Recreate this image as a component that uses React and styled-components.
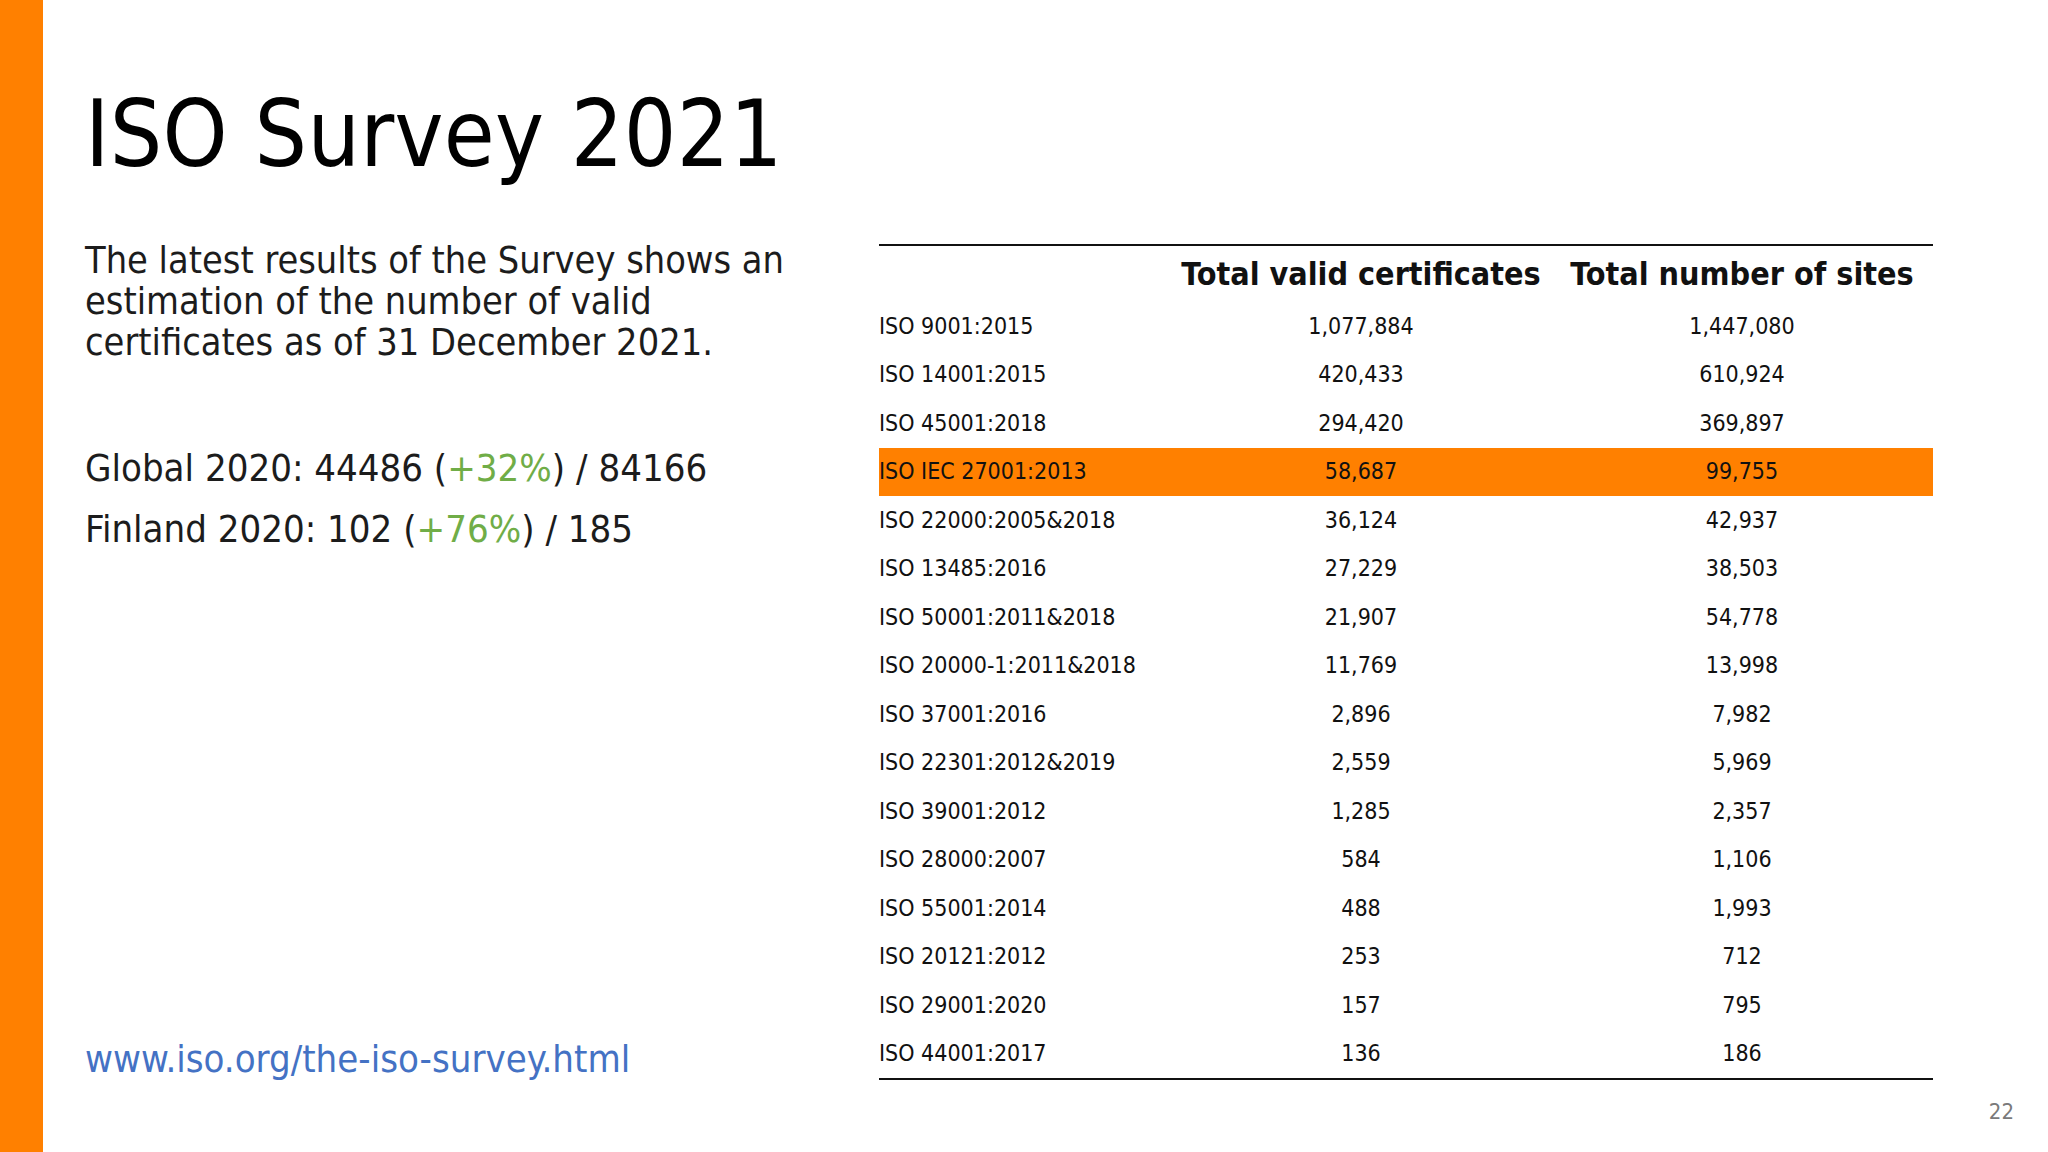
import React from "react";
import styled, { createGlobalStyle } from "styled-components";

const GlobalStyle = createGlobalStyle`
	html, body {
		margin: 0;
		padding: 0;
		background: #ffffff;
	}
	body {
		font-family: "DejaVu Sans Condensed", "DejaVu Sans", sans-serif;
		font-stretch: condensed;
	}
`;

const Slide = styled.div`
	position: relative;
	display: flex;
	width: 2048px;
	height: 1152px;
	overflow: hidden;
	background: #ffffff;
`;

const SideBar = styled.div`
	flex: 0 0 43px;
	background: #ff8000;
`;

const Main = styled.div`
	flex: 1;
	display: flex;
	flex-direction: column;
	padding: 89px 0 73px 42px;
`;

const Title = styled.h1`
	margin: 0;
	font-size: 92px;
	line-height: 92px;
	font-weight: normal;
	color: #000;
	letter-spacing: 0.3px;
`;

const Body = styled.div`
	flex: 1;
	display: flex;
	margin-top: 59px;
`;

const LeftCol = styled.div`
	flex: 0 0 794px;
	display: flex;
	flex-direction: column;
`;

const Text = styled.p`
	margin: 0;
	font-size: 37.6px;
	line-height: 41px;
	color: #1c1c1c;
	width: 740px;
`;

const Stats = styled.div`
	margin-top: 85px;
	display: flex;
	flex-direction: column;
	gap: 20px;
`;

const StatLine = styled.div`
	font-size: 38px;
	line-height: 41px;
	color: #1c1c1c;
`;

const Up = styled.span`
	color: #70ad47;
`;

const Link = styled.a`
	margin-top: auto;
	font-size: 38px;
	line-height: 41px;
	color: #4472c4;
	text-decoration: none;
`;

const TableCol = styled.div`
	padding-top: 4px;
`;

const Table = styled.table`
	width: 1054px;
	table-layout: fixed;
	border-collapse: collapse;
	border-top: 2px solid #111;
	border-bottom: 2px solid #111;
`;

const Th = styled.th`
	padding: 12px 0 12px;
	font-size: 32px;
	line-height: 32px;
	font-weight: bold;
	color: #111;
	text-align: center;
	white-space: nowrap;
`;

const Row = styled.tr`
	background: ${({ $hl }) => ($hl ? "#ff8000" : "transparent")};
`;

const Td = styled.td`
	height: 48.5px;
	padding: 0;
	font-size: 23px;
	line-height: 23px;
	color: #111;
	text-align: ${({ $left }) => ($left ? "left" : "center")};
	vertical-align: middle;
	white-space: nowrap;
`;

const PageNum = styled.div`
	position: absolute;
	right: 34px;
	bottom: 29px;
	font-size: 22px;
	line-height: 22px;
	color: #7a7a7a;
`;

const rows = [
	["ISO 9001:2015", "1,077,884", "1,447,080"],
	["ISO 14001:2015", "420,433", "610,924"],
	["ISO 45001:2018", "294,420", "369,897"],
	["ISO IEC 27001:2013", "58,687", "99,755", true],
	["ISO 22000:2005&2018", "36,124", "42,937"],
	["ISO 13485:2016", "27,229", "38,503"],
	["ISO 50001:2011&2018", "21,907", "54,778"],
	["ISO 20000-1:2011&2018", "11,769", "13,998"],
	["ISO 37001:2016", "2,896", "7,982"],
	["ISO 22301:2012&2019", "2,559", "5,969"],
	["ISO 39001:2012", "1,285", "2,357"],
	["ISO 28000:2007", "584", "1,106"],
	["ISO 55001:2014", "488", "1,993"],
	["ISO 20121:2012", "253", "712"],
	["ISO 29001:2020", "157", "795"],
	["ISO 44001:2017", "136", "186"],
];

export default function App() {
	return (
		<Slide>
			<GlobalStyle />
			<SideBar />
			<Main>
				<Title>ISO Survey 2021</Title>
				<Body>
					<LeftCol>
						<Text>
							The latest results of the Survey shows an estimation of the number of valid
							certificates as of 31 December 2021.
						</Text>
						<Stats>
							<StatLine>
								Global 2020: 44486 (<Up>+32%</Up>) / 84166
							</StatLine>
							<StatLine>
								Finland 2020: 102 (<Up>+76%</Up>) / 185
							</StatLine>
						</Stats>
						<Link href='#'>www.iso.org/the-iso-survey.html</Link>
					</LeftCol>

					{/* certificates table */}
					<TableCol>
						<Table>
							<colgroup>
								<col style={{ width: 292 }} />
								<col style={{ width: 380 }} />
								<col style={{ width: 382 }} />
							</colgroup>
							<thead>
								<tr>
									<Th />
									<Th>Total valid certificates</Th>
									<Th>Total number of sites</Th>
								</tr>
							</thead>
							<tbody>
								{rows.map((r) => (
									<Row key={r[0]} $hl={r[3]}>
										<Td $left>{r[0]}</Td>
										<Td>{r[1]}</Td>
										<Td>{r[2]}</Td>
									</Row>
								))}
							</tbody>
						</Table>
					</TableCol>
				</Body>
			</Main>
			<PageNum>22</PageNum>
		</Slide>
	);
}
